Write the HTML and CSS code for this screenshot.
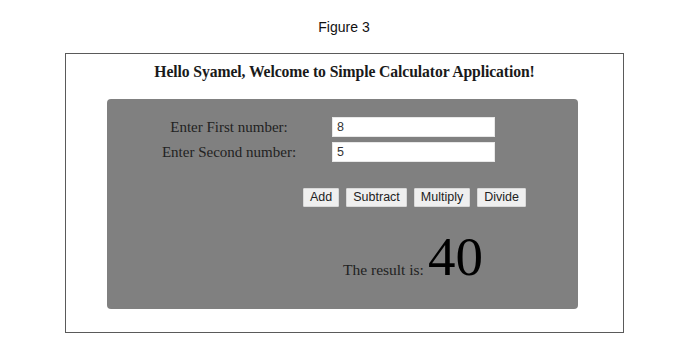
FILE: index.html
```html
<!DOCTYPE html>
<html>
<head>
<meta charset="utf-8">
<link rel="stylesheet" href="styles.css">
</head>
<body>
<div class="caption">Figure 3</div>
<div class="frame">
  <h1 class="title">Hello Syamel, Welcome to Simple Calculator Application!</h1>
  <div class="panel">
    <div class="form">
      <label class="label">Enter First number:</label>
      <input class="field" type="text" value="8">
      <label class="label">Enter Second number:</label>
      <input class="field" type="text" value="5">
    </div>
    <div class="buttons">
      <button class="btn">Add</button>
      <button class="btn">Subtract</button>
      <button class="btn">Multiply</button>
      <button class="btn">Divide</button>
    </div>
    <div class="result">
      <span class="result-label">The result is:</span>
      <span class="result-value">40</span>
    </div>
  </div>
</div>
</body>
</html>
```
FILE: styles.css
```css
html, body {
  margin: 0;
  padding: 0;
  background: #ffffff;
}
body {
  width: 700px;
  height: 352px;
  overflow: hidden;
  font-family: "Liberation Serif", "Times New Roman", serif;
}
.caption {
  font-family: "Liberation Sans", Arial, sans-serif;
  font-size: 14px;
  line-height: 16px;
  color: #111;
  text-align: center;
  padding-top: 19px;
  margin-left: -12px;
  height: 53px;
  box-sizing: border-box;
}
.frame {
  margin-left: 65px;
  width: 559px;
  height: 280px;
  box-sizing: border-box;
  border: 1px solid #5a5a5a;
}
.title {
  margin: 0;
  padding-top: 9px;
  font-size: 15.7px;
  line-height: 18px;
  font-weight: bold;
  color: #1a1a1a;
  text-align: center;
  letter-spacing: -0.1px;
}
.panel {
  margin-top: 18px;
  margin-left: 41px;
  width: 471px;
  height: 210px;
  box-sizing: border-box;
  background: #808080;
  border-radius: 4px;
  padding-top: 18px;
}
.form {
  display: grid;
  grid-template-columns: 164px 163px;
  column-gap: 21px;
  row-gap: 5px;
  margin-left: 40px;
  align-items: center;
}
.label {
  text-align: center;
  font-size: 15px;
  line-height: 20px;
  color: #222;
  white-space: nowrap;
}
.field {
  width: 163px;
  height: 20px;
  box-sizing: border-box;
  margin: 0;
  border: 1px solid #e8e8e8;
  background: #fff;
  padding: 0 4px;
  font-family: "Liberation Sans", Arial, sans-serif;
  font-size: 12.5px;
  color: #333;
  outline: none;
}
.buttons {
  display: flex;
  gap: 7px;
  margin-top: 26px;
  margin-left: 196px;
}
.btn {
  height: 19px;
  margin: 0;
  padding: 0 6px;
  box-sizing: border-box;
  border: 1px solid #d8d8d8;
  border-radius: 1px;
  background: #efefef;
  font-family: "Liberation Sans", Arial, sans-serif;
  font-size: 12.5px;
  line-height: 17px;
  color: #222;
}
.result {
  display: flex;
  align-items: baseline;
  margin-left: 236px;
  margin-top: 20px;
  height: 60px;
}
.result-label {
  font-size: 15.5px;
  color: #222;
  margin-right: 4px;
}
.result-value {
  font-size: 55px;
  line-height: 60px;
  color: #000;
}
```
